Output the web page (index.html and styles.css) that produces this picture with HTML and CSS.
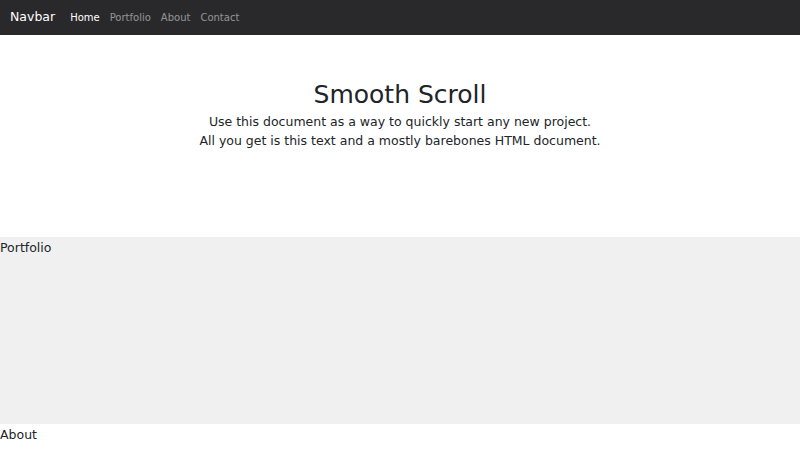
FILE: index.html
```html
<!DOCTYPE html>
<html lang="en">
<head>
<meta charset="utf-8">
<title>Smooth Scroll</title>
<link rel="stylesheet" href="styles.css">
</head>
<body>
<nav class="navbar">
  <a class="brand" href="#">Navbar</a>
  <ul class="nav">
    <li><a class="nav-link active" href="#home">Home</a></li>
    <li><a class="nav-link" href="#portfolio">Portfolio</a></li>
    <li><a class="nav-link" href="#about">About</a></li>
    <li><a class="nav-link" href="#contact">Contact</a></li>
  </ul>
</nav>
<section class="hero" id="home">
  <h1 class="title">Smooth Scroll</h1>
  <p class="lead">Use this document as a way to quickly start any new project.<br>All you get is this text and a mostly barebones HTML document.</p>
</section>
<section class="panel panel-grey" id="portfolio">Portfolio</section>
<section class="panel" id="about">About</section>
<section class="panel panel-grey" id="contact">Contact</section>
</body>
</html>
```

FILE: styles.css
```css
* { box-sizing: border-box; }
html, body { margin: 0; padding: 0; }
body {
  font-family: "DejaVu Sans", sans-serif;
  font-size: 12.5px;
  line-height: 1.5;
  color: #212529;
  background: #fff;
}
.navbar {
  display: flex;
  align-items: center;
  height: 35px;
  padding: 0 10px;
  background: #29292b;
}
.brand {
  font-size: 12.5px;
  color: #fff;
  text-decoration: none;
  margin-right: 10px;
}
.nav {
  display: flex;
  list-style: none;
  margin: 0;
  padding: 0;
}
.nav-link {
  display: block;
  padding: 0 5px;
  font-size: 10px;
  color: rgba(255, 255, 255, 0.5);
  text-decoration: none;
}
.nav-link.active { color: #fff; }
.hero {
  height: 202px;
  padding-top: 45px;
  text-align: center;
}
.title {
  margin: 0 0 2px;
  font-size: 25px;
  font-weight: 400;
  line-height: 30px;
}
.lead {
  margin: 0;
  font-size: 12.5px;
  line-height: 19px;
}
.panel {
  height: 187px;
  padding-top: 1px;
  font-size: 12.5px;
  line-height: 19px;
}
.panel-grey { background: #f0f0f0; }
```
